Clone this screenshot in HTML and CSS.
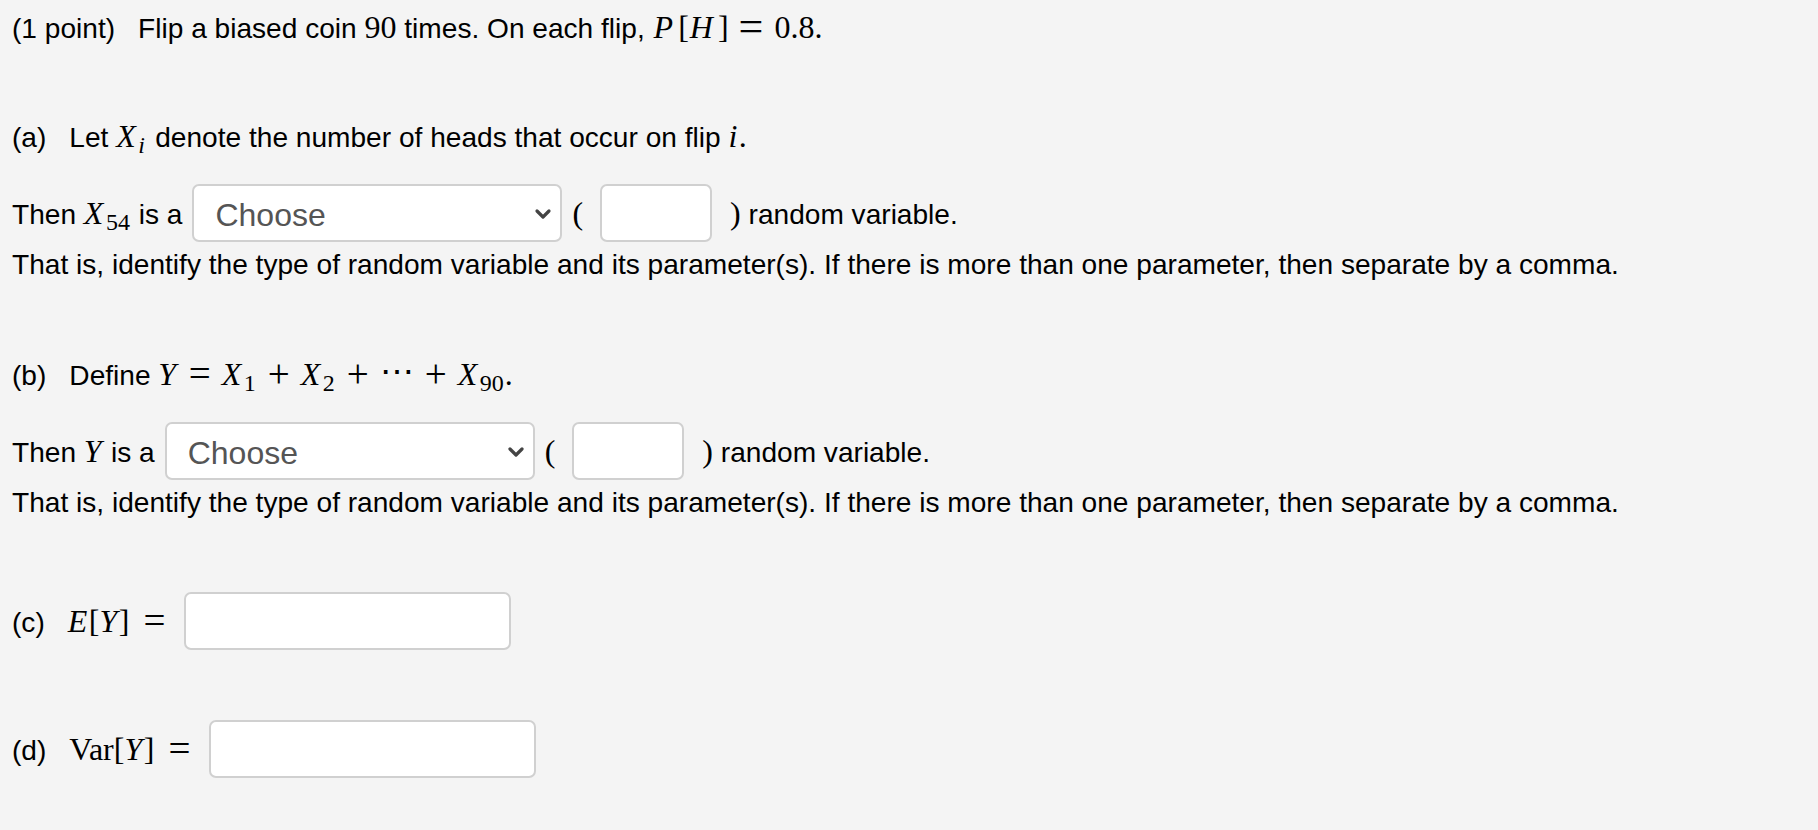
FILE: index.html
```html
<!DOCTYPE html>
<html>
<head>
<meta charset="utf-8">
<link rel="stylesheet" href="styles.css">
</head>
<body>
<div class="page">
  <p class="line title"><span class="lbl">(1 point)</span>Flip a biased coin <span class="m">90</span> times. On each flip, <span class="m"><i class="wide-i">P</i>[<i class="wide-i">H</i>]<span class="rel">=</span>0.8.</span></p>

  <p class="line part"><span class="lbl">(a)</span>Let <span class="m"><i>X</i><sub><i>i</i></sub></span> denote the number of heads that occur on flip <span class="m"><i>i</i>.</span></p>

  <div class="row">
    <span>Then <span class="m"><i>X</i><sub>54</sub></span> is a</span>
    <span class="select"><span class="sel-text">Choose</span><svg class="chev" width="18" height="12" viewBox="0 0 18 12"><path d="M3 3 L9 9 L15 3" fill="none" stroke="#444" stroke-width="3.2" stroke-linecap="round" stroke-linejoin="round"/></svg></span>
    <span class="paren">(</span>
    <span class="box small"></span>
    <span class="after"><span class="m">)</span> random variable.</span>
  </div>
  <p class="line note">That is, identify the type of random variable and its parameter(s). If there is more than one parameter, then separate by a comma.</p>

  <p class="line part"><span class="lbl">(b)</span>Define <span class="m"><i>Y</i><span class="rel">=</span><i>X</i><sub>1</sub><span class="bin">+</span><i>X</i><sub>2</sub><span class="bin">+</span><span class="dots">⋯</span><span class="bin">+</span><i>X</i><sub>90</sub>.</span></p>

  <div class="row">
    <span>Then <span class="m"><i>Y</i></span> is a</span>
    <span class="select"><span class="sel-text">Choose</span><svg class="chev" width="18" height="12" viewBox="0 0 18 12"><path d="M3 3 L9 9 L15 3" fill="none" stroke="#444" stroke-width="3.2" stroke-linecap="round" stroke-linejoin="round"/></svg></span>
    <span class="paren">(</span>
    <span class="box small"></span>
    <span class="after"><span class="m">)</span> random variable.</span>
  </div>
  <p class="line note">That is, identify the type of random variable and its parameter(s). If there is more than one parameter, then separate by a comma.</p>

  <div class="row ans ans-c">
    <span><span class="lbl">(c)</span><span class="m"><i>E</i>[<i>Y</i>]<span class="rel">=</span></span></span>
    <span class="box wide"></span>
  </div>

  <div class="row ans ans-d">
    <span><span class="lbl">(d)</span><span class="m">Var[<i>Y</i>]<span class="rel">=</span></span></span>
    <span class="box wide"></span>
  </div>
</div>
</body>
</html>
```

FILE: styles.css
```css
html, body {
  margin: 0;
  padding: 0;
  background: #f4f4f4;
}
body {
  font-family: "Liberation Sans", Arial, Helvetica, sans-serif;
  font-size: 28.1px;
  color: #000;
}
.page {
  padding: 11px 12px 0 12px;
}
.line {
  margin: 0;
  height: 32px;
  line-height: 32px;
  white-space: nowrap;
}
.lbl {
  margin-right: 23px;
}
.m {
  font-family: "Liberation Serif", "Times New Roman", serif;
  font-size: 32px;
}
.m i {
  font-style: italic;
  margin-right: 1.5px;
}
.m i.wide-i {
  margin-left: 1px;
  margin-right: 5px;
}
.m i + sub { margin-left: 1px; }
.m sub {
  font-size: 24px;
  vertical-align: -6px;
  line-height: 0;
  margin-right: 1px;
}
.rel, .bin {
  font-size: 39px;
  position: relative;
  top: 2px;
  line-height: 0;
}
.rel { margin: 0 11px; }
.title .rel {
  font-size: 44px;
  top: 3px;
  margin: 0 11px 0 10px;
}
.bin { margin: 0 11px; }
.dots {
  font-size: 34px;
  line-height: 0;
  position: relative;
  top: -2px;
}
.part { margin-top: 77px; }
.row {
  display: flex;
  align-items: center;
  margin-top: 32px;
  white-space: nowrap;
}
.note { margin-top: 7px; }
.select {
  display: inline-flex;
  align-items: center;
  justify-content: space-between;
  box-sizing: border-box;
  width: 370px;
  height: 58px;
  margin-left: 10px;
  padding: 0 8px 0 21px;
  background: #fff;
  border: 2px solid #d0d0d0;
  border-radius: 7px;
  color: #555;
  font-size: 32px;
}
.sel-text { padding-top: 4px; }
.chev { margin-top: 2px; }
.paren {
  font-family: "Liberation Serif", "Times New Roman", serif;
  font-size: 32px;
  margin-left: 10px;
}
.box {
  display: inline-block;
  box-sizing: border-box;
  height: 58px;
  background: #fff;
  border: 2px solid #d0d0d0;
  border-radius: 7px;
}
.small {
  width: 112px;
  margin-left: 17px;
}
.after {
  margin-left: 18px;
}
.ans-c { margin-top: 73px; }
.ans-d { margin-top: 70px; }
.ans .rel { margin: 0 0 0 14px; }
.wide {
  width: 327px;
  margin-left: 19px;
}
```
